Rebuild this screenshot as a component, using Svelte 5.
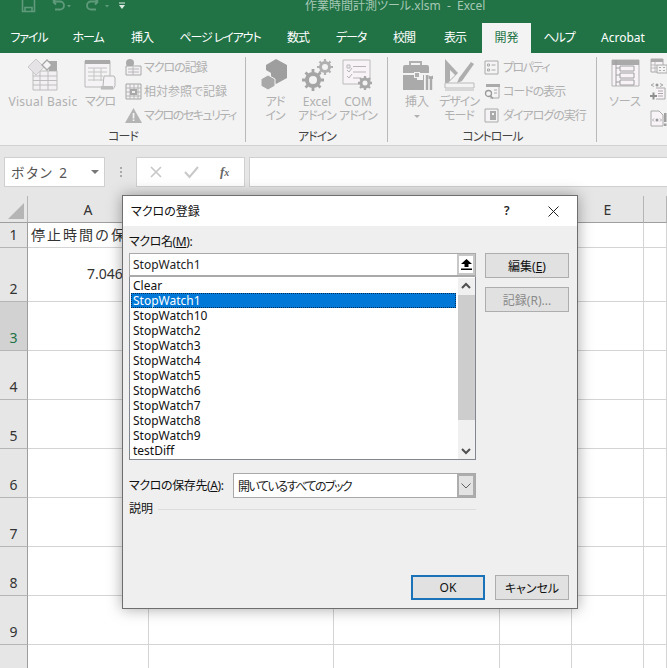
<script>
  const tabs = [
    { t: 'ファイル', w: 58 }, { t: 'ホーム', w: 60 }, { t: '挿入', w: 48 }, { t: 'ページ レイアウト', w: 108 },
    { t: '数式', w: 48 }, { t: 'データ', w: 58 }, { t: '校閲', w: 48 }, { t: '表示', w: 54 },
    { t: '開発', w: 49 }, { t: 'ヘルプ', w: 56 }, { t: 'Acrobat', w: 72 }
  ];
  const cols = ['A','','','','E',''];
  const rows = [
    { n: 1, h: 25 }, { n: 2, h: 54 }, { n: 3, h: 49 }, { n: 4, h: 49 }, { n: 5, h: 49 },
    { n: 6, h: 49 }, { n: 7, h: 49 }, { n: 8, h: 49 }, { n: 9, h: 49 }, { n: '', h: 24 }
  ];
  const macros = ['Clear','StopWatch1','StopWatch10','StopWatch2','StopWatch3','StopWatch4','StopWatch5','StopWatch6','StopWatch7','StopWatch8','StopWatch9','testDiff'];
  const template = '28px 121px 185px 166px 72px 72px 1fr';
  const rowTemplate = '27px ' + rows.map((r) => r.h + 'px').join(' ');
</script>

<div class="app">
  <header class="titlebar">
    <div class="qat">
      <svg width="15" height="13" viewBox="0 0 15 13"><path d="M1.500-3h12v14.500h-12zM4 12V7.500h7V12" fill="none" stroke="#5f9a7b" stroke-width="1.600"/></svg>
      <svg width="22" height="13" viewBox="0 0 22 13"><path d="M3 1.500h7a4 4 0 0 1 0 8H5M3 1.500l3-3M3 1.500l3 3" fill="none" stroke="#5f9a7b" stroke-width="1.800"/><path d="M17 5h4l-2 2.500z" fill="#5f9a7b"/></svg>
      <svg class="redo" width="26" height="13" viewBox="0 0 26 13"><path d="M13 1.500H6a4 4 0 0 0 0 8h5M13 1.500l-3-3M13 1.500l-3 3" fill="none" stroke="#5f9a7b" stroke-width="1.800"/><path d="M20 5h4l-2 2.500z" fill="#5f9a7b"/></svg>
      <svg class="more" width="6" height="8" viewBox="0 0 6 8"><path d="M0 .5h6v1H0zM0 3h6L3 7z" fill="#dfeae4"/></svg>
    </div>
    <div class="doc">作業時間計測ツール.xlsm&nbsp; -&nbsp; Excel</div>
  </header>

  <nav class="tabs">
    {#each tabs as tab}
      <div class="tab" class:active={tab.t === '開発'} class:latin={tab.t === 'Acrobat'} style="width:{tab.w}px">{tab.t}</div>
    {/each}
  </nav>

  <section class="ribbon">
    <div class="group g1">
      <div class="body">
        <div class="large" style="width:76px">
          <svg width="32" height="32" viewBox="0 0 32 32"><path d="M6 12h24v19H6zM6 17h24M6 21.500h24M6 26h24M13 12v19M21 12v19" fill="#f3f0f3" stroke="#bdbdbd"/><path d="M22 2h8v10h-8z" fill="#aaa"/><path d="M9 0l8 8-8 8-8-8z" fill="#e6e3e6" stroke="#c9c9c9"/><path d="M20 1l5 5-5 5-5-5z" fill="#f5f3f5" stroke="#a8a8a8" stroke-width="1.300"/></svg>
          <span class="vb">Visual Basic</span>
        </div>
        <div class="large" style="width:38px">
          <svg width="32" height="32" viewBox="0 0 32 32"><path d="M1 2h25v26H1z" fill="#f5f3f5" stroke="#b9b9b9"/><path d="M1 1h25v4H1z" fill="#a9a9a9"/><path d="M4 9h19M4 13h19M4 17h15M4 21h15M10 9v13M17 9v13" stroke="#c5c5c5" fill="none"/><path d="M20 17h10l1 2v8l-2 3H17l2-3z" fill="#f5f3f5" stroke="#b5b5b5"/><path d="M17 27h12v3H17z" fill="#bdbdbd"/></svg>
          <span class="ja">マクロ</span>
        </div>
        <div class="smalls first">
          <div class="small"><svg width="17" height="17" viewBox="0 0 17 17"><circle cx="5" cy="4" r="4" fill="#aaa"/><path d="M1 7h15v9H1z" fill="#f3f0f3" stroke="#aaa"/><path d="M3 10h11M3 13h11M8 8v8" stroke="#b8b8b8"/></svg><span class="k1">マクロの記録</span></div>
          <div class="small"><svg width="17" height="17" viewBox="0 0 17 17"><path d="M1 1h15v15H1z" fill="#f3f0f3" stroke="#a5a5a5"/><path d="M1 5h15M1 9h15M1 13h15M5 1v15M9 1v15M13 1v15" stroke="#b5b5b5"/><path d="M5 6h7v6H5z" fill="#a8a8a8"/><path d="M7 8h3v2H7z" fill="#eee"/></svg><span>相対参照で記録</span></div>
          <div class="small"><svg width="17" height="17" viewBox="0 0 17 17"><path d="M8.500 1L17 16H0z" fill="#b4b4b4"/><path d="M7.700 6h1.700v5.500H7.700zM7.700 12.500h1.700V14H7.700z" fill="#f3f3f3"/></svg><span class="k2">マクロのセキュリティ</span></div>
        </div>
      </div>
      <div class="title">コード</div>
    </div>

    <div class="group g2">
      <div class="body">
        <div class="large" style="width:38px">
          <svg width="32" height="32" viewBox="0 0 32 32"><path d="M17 0l11 6v13l-11 6-5-3v-8l-5-3V6z" fill="#9e9e9e"/><path d="M9 16l7 4v7l-7 4-7-4v-7z" fill="#a8a8a8" stroke="#f3f3f3"/></svg>
          <span class="ja">アド<br>イン</span>
        </div>
        <div class="large" style="width:40px;margin-left:3px">
          <svg width="32" height="32" viewBox="0 0 32 32"><circle cx="24" cy="8" r="4.500" fill="none" stroke="#b0b0b0" stroke-width="3"/><path d="M24 0v16M16 8h16M18.500 2.500l11 11M29.500 2.500l-11 11" stroke="#b0b0b0" stroke-width="2.200"/><circle cx="24" cy="8" r="3" fill="#f3f3f3"/><circle cx="12" cy="21" r="6" fill="none" stroke="#a5a5a5" stroke-width="4"/><path d="M12 10v22M1 21h22M4.500 13.500l15 15M19.500 13.500l-15 15" stroke="#a5a5a5" stroke-width="2.800"/><circle cx="12" cy="21" r="4" fill="#f3f3f3"/></svg>
          <span>Excel<br><b class="ja">アドイン</b></span>
        </div>
        <div class="large" style="width:40px;margin-left:1px">
          <svg width="32" height="32" viewBox="0 0 32 32"><path d="M1 1h27v24H1z" fill="#f7f3f7" stroke="#bcbcbc"/><path d="M5 6h3v3H5zM11 7.500h13M5 11l2 2 3-4M11 13h13M5 17l2 2 3-4M11 19h7" fill="none" stroke="#b5b5b5"/><circle cx="23" cy="24" r="4" fill="none" stroke="#a8a8a8" stroke-width="3"/><path d="M23 17v14M16 24h14M18 19l10 10M28 19L18 29" stroke="#a8a8a8" stroke-width="2.300"/><circle cx="23" cy="24" r="2.500" fill="#f3f3f3"/></svg>
          <span>COM<br><b class="ja">アドイン</b></span>
        </div>
      </div>
      <div class="title">アドイン</div>
    </div>

    <div class="group g3">
      <div class="body">
        <div class="large" style="width:38px">
          <svg width="32" height="32" viewBox="0 0 32 32"><path d="M9 7V3h11v4" fill="none" stroke="#b0b0b0" stroke-width="2"/><path d="M2 8q0-2 2-2h22q2 0 2 2v6H2z" fill="#aaa"/><path d="M2 16h14v5h6v-5h1v15H2z" fill="#aaa"/><path d="M13 13h6v6h-6z" fill="#f3f3f3"/><path d="M14 14h4v4h-4z" fill="#b0b0b0"/><path d="M23 17h4v14h-4z" fill="#f3f3f3"/><path d="M26 16v15M30 19v12" stroke="#aaa" stroke-width="2.400"/><path d="M27.500 16a3 3 0 0 0 5 0v4h-5z" fill="#aaa"/></svg>
          <span>挿入</span>
          <i class="caret"></i>
        </div>
        <div class="large" style="width:46px">
          <svg width="32" height="32" viewBox="0 0 32 32"><path d="M2 0l13 14-13 13z" fill="#aeaeae"/><path d="M7 11l5 5-5 5z" fill="#f3f3f3"/><path d="M16 19L28 3l3 2-12 17-5 2z" fill="#aeaeae"/><path d="M14 24h17v5H2v-5z" fill="#f3f3f3" stroke="#bbb"/><path d="M2 31h29" stroke="#bbb"/></svg>
          <span class="ja">デザイン<br>モード</span>
        </div>
        <div class="smalls second">
          <div class="small"><svg width="17" height="17" viewBox="0 0 17 17"><path d="M1 2h13v13H1z" fill="#f5f3f5" stroke="#aaa"/><path d="M3.500 5h2v2h-2zM3.500 10h2v2h-2z" fill="none" stroke="#aaa"/><path d="M7.500 6h4M7.500 11h4" stroke="#aaa"/></svg><span class="k2">プロパティ</span></div>
          <div class="small"><svg width="17" height="17" viewBox="0 0 17 17"><path d="M3 3h12v12H6" fill="#f5f3f5" stroke="#aaa"/><path d="M2 1h14v3H2z" fill="#aaa"/><path d="M10 7h3M10 10h3" stroke="#aaa"/><circle cx="4.500" cy="10.500" r="3" fill="#f3f3f3" stroke="#999" stroke-width="1.300"/><path d="M6.500 13l2.500 2.500" stroke="#999" stroke-width="1.500"/></svg><span class="k1">コードの表示</span></div>
          <div class="small"><svg width="17" height="17" viewBox="0 0 17 17"><path d="M1 2h13v13H1z" fill="#f5f3f5" stroke="#aaa"/><path d="M6 4h6v9H6z" fill="#aaa"/><path d="M8 6h2v2H8z" fill="#f3f3f3"/></svg><span class="k1">ダイアログの実行</span></div>
        </div>
      </div>
      <div class="title">コントロール</div>
    </div>

    <div class="group g4">
      <div class="body">
        <div class="large" style="width:44px">
          <svg width="32" height="32" viewBox="0 0 32 32"><path d="M3 1h27v26H3z" fill="#f7f3f7" stroke="#b5b5b5"/><path d="M3 1h27v5H3z" fill="#aaa"/><path d="M7 1v26M7 9h4M7 16h4M7 23h4" fill="none" stroke="#a0a0a0"/><path d="M11 7h14v5H11zM11 14h14v5H11zM11 21h14v5H11z" fill="#f7f3f7" stroke="#a0a0a0"/></svg>
          <span>ソース</span>
        </div>
        <div class="tiny">
          <svg width="17" height="16" viewBox="0 0 17 16"><path d="M1 1h12v13H1z" fill="#f7f3f7" stroke="#aaa"/><path d="M1 1h12v3H1z" fill="#aaa"/><path d="M1 7h6M1 10h6M5 4v10" stroke="#bbb"/><path d="M7 7h10v8H7z" fill="#f3f3f3" stroke="#aaa"/><path d="M9 9h2v1H9zM13 9h2v1h-2zM9 12h2v1H9zM13 12h2v1h-2z" fill="#aaa"/></svg>
          <svg width="17" height="19" viewBox="0 0 17 19"><path d="M4 1.500L1 3l3 1.500M10 1.500L13 3l-3 1.500" fill="none" stroke="#aaa"/><circle cx="7" cy="3" r="1.500" fill="#999"/><path d="M6 6h9v11H6" fill="#f7f3f7" stroke="#aaa"/><path d="M8 9h5M8 11.500h5M8 14h5" stroke="#aaa"/><path d="M0 14h7M3.500 10.500v7" stroke="#8f8f8f" stroke-width="2"/></svg>
          <svg width="17" height="18" viewBox="0 0 17 18"><path d="M1 2h8l4 4v11H1z" fill="#f7f3f7" stroke="#aaa"/><path d="M4 9.500l-1.500 1.500L4 12.500M10 9.500l1.500 1.500L10 12.500" fill="none" stroke="#aaa"/><circle cx="7" cy="11" r="1.500" fill="#999"/><path d="M14 4h2.500v9H14zM14 14.500h2.500V17H14z" fill="#a0a0a0"/></svg>
        </div>
      </div>
    </div>
  </section>

  <section class="formula">
    <div class="namebox"><span>ボタン 2</span><i class="caret dark"></i></div>
    <div class="dots"><b></b><b></b><b></b></div>
    <div class="fxbox">
      <svg width="14" height="14" viewBox="0 0 14 14"><path d="M2 2l10 10M12 2L2 12" stroke="#c8c8c8" stroke-width="1.700"/></svg>
      <svg width="15" height="14" viewBox="0 0 15 14"><path d="M1 7l4.500 5L14 2" fill="none" stroke="#c8c8c8" stroke-width="2"/></svg>
      <em>f<small>x</small></em>
    </div>
    <div class="input"></div>
  </section>

  <section class="sheet" style="grid-template-columns:{template};grid-template-rows:{rowTemplate}">
    <div class="corner"><i></i></div>
    {#each cols as c}<div class="colhead">{c}</div>{/each}
    {#each rows as r}
      <div class="rowhead" class:selected={r.n === 3}>{r.n}</div>
      {#each cols as _, i}
        <div class="cell">
          {#if r.n === 1 && i === 0}<span class="c1">停止時間の保存</span>{/if}
          {#if r.n === 2 && i === 0}<span class="c2">7.046</span>{/if}
        </div>
      {/each}
    {/each}
  </section>

  <div class="dialog">
    <div class="dtitle">
      <span class="dname">マクロの登録</span>
      <span class="help">?</span>
      <svg class="close" width="11" height="11" viewBox="0 0 11 11"><path d="M.5.500l10 10M10.500.500l-10 10" stroke="#222" stroke-width="1"/></svg>
    </div>
    <div class="dbody">
      <div class="main">
        <span class="lbl">マクロ名(<u>M</u>):</span>
        <div class="namefield">
          <span>StopWatch1</span>
          <div class="upbtn"><svg width="11" height="11" viewBox="0 0 11 11"><path d="M5.500 0L11 5H7.500v3h-4V5H0zM0 9.500h11V11H0z" fill="#000"/></svg></div>
        </div>
        <div class="list">
          <div class="items">
            {#each macros as m}<div class="item" class:sel={m === 'StopWatch1'}>{m}</div>{/each}
          </div>
          <div class="scroll">
            <svg width="16" height="17" viewBox="0 0 16 17"><path d="M4 10l4-4 4 4" fill="none" stroke="#505050" stroke-width="2"/></svg>
            <div class="thumb"></div>
            <div class="track"></div>
            <svg width="16" height="17" viewBox="0 0 16 17"><path d="M4 7l4 4 4-4" fill="none" stroke="#505050" stroke-width="2"/></svg>
          </div>
        </div>
        <div class="store">
          <span class="lbl">マクロの保存先(<u>A</u>):</span>
          <div class="combo">
            <span>開いているすべてのブック</span>
            <div class="comboBtn"><svg width="10" height="6" viewBox="0 0 10 6"><path d="M.5.500L5 5 9.500.500" fill="none" stroke="#606060"/></svg></div>
          </div>
        </div>
        <div class="desc"><span>説明</span><hr></div>
      </div>
      <div class="side">
        <button class="btn">編集(<u>E</u>)</button>
        <button class="btn off">記録(R)...</button>
      </div>
      <div class="foot">
        <button class="btn ok">OK</button>
        <button class="btn">キャンセル</button>
      </div>
    </div>
  </div>
</div>

<style>
  :global(body) { margin: 0; overflow: hidden; }
  .app {
    position: relative;
    width: 667px;
    height: 668px;
    overflow: hidden;
    background: #fff;
    font-family: "Noto Sans", "Noto Sans CJK JP", sans-serif;
    font-feature-settings: "palt";
    font-size: 12px;
    color: #222;
  }

  .titlebar { height: 23px; background: #217346; position: relative; display: flex; }
  .qat { display: flex; align-items: flex-start; padding-left: 21px; gap: 14px; }
  .redo { margin-left: -1px; }
  .more { margin: 2px 0 0 -6px; }
  .doc { position: absolute; left: 305px; top: -3px; color: #a6c8b5; font-size: 12px; line-height: 18px; white-space: nowrap; }

  .tabs { height: 30px; background: #217346; display: flex; }
  .tab { flex: none; text-align: center; line-height: 30px; color: #fff; font-size: 12px; letter-spacing: -1.100px; white-space: nowrap; }
  .tab.latin { letter-spacing: 0; }
  .tab.active { background: #f3f3f3; color: #217346; letter-spacing: 0; }

  .ribbon { height: 93px; box-sizing: border-box; background: #f3f3f3; border-bottom: 1px solid #d2d2d2; display: flex; }
  .group { position: relative; display: flex; flex-direction: column; height: 92px; box-sizing: border-box; }
  .group::after { content: ""; position: absolute; right: 0; top: 4px; bottom: 3px; width: 1px; background: #b9b9b9; }
  .g1 { width: 246px; padding-left: 5px; }
  .g2 { width: 142px; padding-left: 10px; }
  .g3 { width: 209px; padding-left: 10px; }
  .g4 { flex: 1; padding-left: 6px; }
  .g4::after { display: none; }
  .body { display: flex; flex: 1; min-height: 0; }
  .title { margin-left: -10px; text-align: center; font-size: 12px; letter-spacing: -1px; line-height: 14px; color: #444; height: 15px; }
  .g1 .title { margin-left: -5px; }
  .large { display: flex; flex-direction: column; align-items: center; padding-top: 6px; font-size: 12px; line-height: 14px; color: #b0b0b0; text-align: center; white-space: nowrap; }
  .large > span { margin-top: 4px; }
  .large svg { flex: none; }
  .ja { letter-spacing: -1px; font-weight: normal; }
  .vb { letter-spacing: .3px; }
  .caret { width: 0; height: 0; border: 3px solid transparent; border-top: 3px solid #b0b0b0; border-bottom: 0; margin-top: 6px; }
  .smalls { display: flex; flex-direction: column; padding-top: 2px; }
  .smalls.first { margin-left: 6px; }
  .smalls.second { margin-left: 2px; }
  .small { display: flex; flex: none; align-items: center; gap: 2px; height: 24px; font-size: 12px; color: #b0b0b0; white-space: nowrap; }
  .k1 { letter-spacing: -1px; }
  .k2 { letter-spacing: -1.500px; }
  .tiny { display: flex; flex-direction: column; gap: 8px; padding: 5px 0 0 3px; }

  .formula { height: 50px; box-sizing: border-box; background: #e6e6e6; display: flex; align-items: flex-start; padding: 11px 0 0 4px; }
  .namebox { width: 101px; height: 30px; box-sizing: border-box; background: #fff; border: 1px solid #d0d0d0; display: flex; align-items: center; justify-content: space-between; padding: 0 5px 0 6px; font-size: 13.500px; color: #555; letter-spacing: 2px; }
  .caret.dark { border-width: 4px; border-top-color: #777; border-bottom: 0; margin: 0; }
  .dots { width: 31px; display: flex; flex-direction: column; align-items: center; gap: 2px; padding-top: 10px; }
  .dots b { width: 2px; height: 2px; background: #aaa; }
  .fxbox { width: 109px; height: 30px; box-sizing: border-box; background: #fff; border: 1px solid #d0d0d0; display: flex; align-items: center; gap: 21px; padding-left: 12px; }
  .fxbox em { font-family: "Liberation Serif", serif; font-size: 13px; font-weight: bold; color: #666; }
  .fxbox small { font-size: 10px; }
  .input { flex: 1; margin-left: 4px; height: 30px; box-sizing: border-box; background: #fff; border: 1px solid #d0d0d0; border-right: 0; }

  .sheet { display: grid; background: #fff; }
  .corner { background: #e6e6e6; border-right: 1px solid #b5b5b5; border-bottom: 1px solid #9e9e9e; box-sizing: border-box; position: relative; }
  .corner i { position: absolute; right: 3px; bottom: 3px; width: 0; height: 0; border-style: solid; border-width: 0 0 16px 16px; border-color: transparent transparent #b5b5b5 transparent; }
  .colhead { background: #e6e6e6; border-right: 1px solid #b5b5b5; border-bottom: 1px solid #9e9e9e; box-sizing: border-box; text-align: center; line-height: 27px; font-size: 14px; color: #333; }
  .rowhead { background: #e6e6e6; border-right: 1px solid #9e9e9e; border-bottom: 1px solid #b5b5b5; box-sizing: border-box; display: flex; align-items: flex-end; justify-content: center; font-size: 14px; line-height: 24px; color: #333; overflow: hidden; }
  .rowhead.selected { background: #d2d2d2; color: #217346; }
  .cell { border-right: 1px solid #d4d4d4; border-bottom: 1px solid #d4d4d4; box-sizing: border-box; min-width: 0; position: relative; display: flex; align-items: center; }
  .c1 { font-feature-settings: normal; padding: 0 0 3px 3px; font-size: 14px; letter-spacing: 2px; white-space: nowrap; color: #333; }
  .c2 { padding: 0 0 2px 59px; font-size: 14px; color: #333; }

  .dialog { position: absolute; left: 122px; top: 195px; width: 456px; height: 414px; box-sizing: border-box; background: #efefef; border: 1px solid #6e6e6e; box-shadow: 0 0 14px rgba(0,0,0,.35); display: flex; flex-direction: column; }
  .dtitle { height: 30px; background: #fff; display: flex; align-items: center; flex: none; position: relative; padding-left: 8px; }
  .dname { font-size: 12px; color: #111; }
  .help { position: absolute; left: 381px; top: 6px; font-size: 12px; font-weight: 600; color: #222; }
  .close { position: absolute; left: 425px; top: 10px; }
  .dbody { flex: 1; position: relative; display: grid; grid-template-columns: 347px 84px; column-gap: 9px; grid-template-rows: auto 1fr; padding: 8px 0 8px 6px; }
  .lbl { font-size: 12px; line-height: 16px; color: #111; display: block; white-space: nowrap; letter-spacing: -.4px; }
  .main { display: flex; flex-direction: column; }
  .namefield { margin-top: 3px; height: 24px; box-sizing: border-box; background: #fff; border: 1px solid #a9a9a9; border-bottom-width: 2px; display: flex; align-items: center; justify-content: space-between; padding-left: 3px; font-size: 12px; }
  .upbtn { width: 18px; height: 100%; background: #fff; border: 2px solid #c8c8c8; box-sizing: border-box; display: flex; align-items: center; justify-content: center; }
  .list { height: 183px; box-sizing: border-box; border: 1px solid #82878f; border-top: 0; background: #fff; display: flex; padding-top: 1px; }
  .items { flex: 1; padding-left: 1px; }
  .item { height: 15px; line-height: 15px; font-size: 12px; padding-left: 2px; color: #111; box-sizing: border-box; margin-right: 1px; }
  .item.sel { background: #0078d7; color: #fff; outline: 1px dotted #00305a; outline-offset: -1px; }
  .scroll { width: 17px; background: #f0f0f0; display: flex; flex-direction: column; margin-left: 1px; }
  .thumb { height: 125px; background: #cdcdcd; flex: none; }
  .track { flex: 1; }
  .store { display: flex; align-items: center; margin-top: 13px; }
  .store .lbl { width: 104px; }
  .combo { flex: 1; height: 25px; box-sizing: border-box; background: #fff; border: 1px solid #a9a9a9; display: flex; align-items: center; justify-content: space-between; padding-left: 4px; font-size: 12px; letter-spacing: -1.500px; }
  .comboBtn { width: 18px; height: 100%; box-sizing: border-box; background: #e3e3e3; border: 2px solid #adadad; display: flex; align-items: center; justify-content: center; }
  .desc { display: flex; align-items: center; gap: 5px; margin-top: 3px; font-size: 12px; line-height: 16px; color: #111; }
  .desc hr { flex: 1; height: 1px; border: 0; margin: 0; background: #dcdcdc; }
  .side { display: flex; flex-direction: column; gap: 9px; padding-top: 19px; }
  .btn { width: 84px; height: 25px; box-sizing: border-box; background: #e1e1e1; border: 1px solid #adadad; font: inherit; font-size: 12px; color: #111; padding: 0; }
  .btn.off { color: #8a8a8a; }
  .foot { grid-column: 1 / 3; align-self: end; justify-self: end; display: flex; gap: 10px; }
  .foot .btn { width: 74px; }
  .btn.ok { border: 2px solid #1a72b8; }
</style>
